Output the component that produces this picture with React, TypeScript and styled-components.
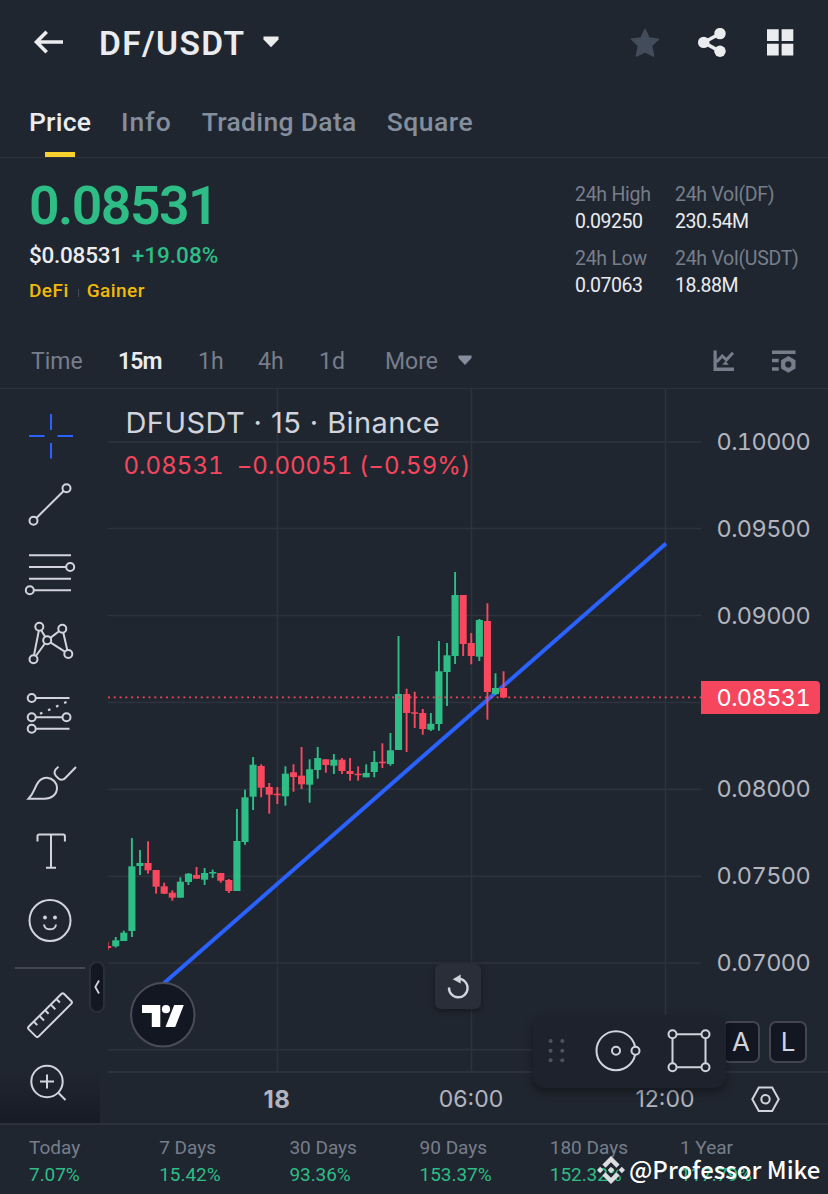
import React from "react";
import styled, { createGlobalStyle } from "styled-components";
import { SiBinance } from "react-icons/si";

const c = {
  bg: "#202630",
  line: "#2c323c",
  grid: "#2d333c",
  text: "#eaecef",
  muted: "#848e9c",
  dim: "#777e8b",
  green: "#2ebd85",
  red: "#f6465d",
  candleRed: "#f9475d",
  yellow: "#f0b90b",
  icon: "#d1d4dc",
  blue: "#2962ff",
};

const GlobalStyle = createGlobalStyle`
  * { box-sizing: border-box; }
  body { margin: 0; background: ${c.bg}; }
`;

const Screen = styled.div`
  position: relative;
  width: 828px;
  height: 1194px;
  overflow: hidden;
  display: flex;
  flex-direction: column;
  background: ${c.bg};
  color: ${c.text};
  font-family: Roboto, "Liberation Sans", sans-serif;
`;

const TopBar = styled.header`
  height: 87px;
  display: flex;
  align-items: center;
  padding: 0 34px 0 33px;
`;

const BackIcon = styled.svg`
  width: 32px;
  height: 30px;
  margin: -3px 34px 0 0;
`;

const Pair = styled.h1`
  margin: 0;
  font-size: 33.5px;
  line-height: 40px;
  font-weight: 600;
  letter-spacing: 1.35px;
`;

const Caret = styled.svg<{ $size: number; $gap?: number }>`
  width: ${(p) => p.$size}px;
  height: ${(p) => p.$size * 0.75}px;
  margin: -3px 0 0 ${(p) => p.$gap ?? 0}px;
`;

const Actions = styled.div`
  margin: -2px 0 0 auto;
  display: flex;
  align-items: center;
  gap: 37px;
`;

const ActionIcon = styled.svg`
  width: 30px;
  height: 30px;
`;

const Tabs = styled.nav`
  height: 71px;
  display: flex;
  gap: 30px;
  padding: 0 29px;
  border-bottom: 1px solid ${c.line};
`;

const Tab = styled.div<{ $active?: boolean; $space?: number }>`
  height: 70px;
  display: flex;
  flex-direction: column;
  align-items: center;
  justify-content: space-between;
  padding-top: 19px;
  font-size: 26.5px;
  line-height: 32px;
  font-weight: 500;
  letter-spacing: ${(p) => p.$space ?? 0}px;
  white-space: nowrap;
  color: ${(p) => (p.$active ? c.text : c.muted)};
`;

const Underline = styled.span`
  width: 30px;
  height: 5px;
  background: #f8d12f;
`;

const Summary = styled.section`
  height: 176px;
  display: flex;
  justify-content: space-between;
  padding: 21px 29px 0;
`;

const Quote = styled.div`
  display: flex;
  flex-direction: column;
`;

const BigPrice = styled.div`
  font-size: 53.5px;
  line-height: 54px;
  font-weight: 600;
  letter-spacing: -1.5px;
  color: ${c.green};
`;

const SubPrice = styled.div`
  display: flex;
  gap: 9px;
  margin-top: 7px;
  font-size: 22.5px;
  line-height: 30px;
  font-weight: 500;
  letter-spacing: -0.25px;
`;

const Change = styled.span`
  color: ${c.green};
  letter-spacing: 0;
`;

const Tags = styled.div`
  display: flex;
  align-items: center;
  margin-top: 8px;
  font-size: 19px;
  line-height: 26px;
  font-weight: 500;
  letter-spacing: 0.45px;
  color: ${c.yellow};
`;

const TagDivider = styled.i`
  width: 1px;
  height: 8px;
  margin: 4px 8px 0 9px;
  background: #434c5a;
`;

const Stats = styled.dl`
  margin: 0;
  display: grid;
  grid-template-columns: 100px 124px;
  grid-auto-rows: 63.5px;
`;

const Stat = styled.div`
  padding-top: 2px;
  font-size: 19.5px;
  line-height: 27px;
  white-space: nowrap;
`;

const StatLabel = styled.dt`
  color: ${c.dim};
  letter-spacing: -0.28px;
`;

const StatValue = styled.dd`
  margin: 0;
  color: ${c.text};
  letter-spacing: -0.5px;
`;

const Intervals = styled.nav`
  height: 55px;
  display: flex;
  align-items: center;
  padding: 1px 31px 0;
  font-size: 23px;
  border-bottom: 1px solid ${c.line};
`;

const Interval = styled.span<{ $w: number; $active?: boolean }>`
  width: ${(p) => p.$w}px;
  letter-spacing: ${(p) => (p.$active ? -0.9 : 0)}px;
  font-weight: ${(p) => (p.$active ? 600 : 400)};
  color: ${(p) => (p.$active ? c.text : c.dim)};
`;

const ToolIcons = styled.div`
  margin-left: auto;
  display: flex;
  gap: 34px;
`;

const SmallIcon = styled.svg`
  width: 26px;
  height: 26px;
`;

const ChartArea = styled.main`
  position: relative;
  height: 736px;
  display: flex;
  border-bottom: 2px solid ${c.line};
`;

const Sidebar = styled.aside`
  width: 100px;
  display: flex;
  flex-direction: column;
  padding-top: 12.5px;
  background: linear-gradient(to bottom, transparent 680px, #171b26 734px);
`;

const Tool = styled.div`
  height: 69px;
  display: flex;
  align-items: center;
  padding-left: 22px;
`;

const ToolSvg = styled.svg`
  width: 56px;
  height: 56px;
  fill: none;
  stroke: ${c.icon};
  stroke-width: 2;
`;

const ToolDivider = styled.hr`
  width: 70px;
  height: 2px;
  margin: 13px 0 12px 15px;
  border: 0;
  background: #434651;
`;

const ChartMain = styled.div`
  flex: 1;
  display: flex;
  flex-direction: column;
`;

const PlotRow = styled.div`
  height: 682px;
  display: flex;
  padding-left: 8px;
`;

const PlotSvg = styled.svg`
  width: 593px;
  height: 682px;
  flex: none;
`;

const PriceScale = styled.div`
  width: 127px;
  padding-top: 10px;
  font-family: Inter, "Liberation Sans", sans-serif;
  font-variant-numeric: tabular-nums;
`;

const PriceTick = styled.div`
  height: 86.85px;
  line-height: 86.85px;
  padding-left: 15.5px;
  font-size: 23.5px;
  letter-spacing: -0.6px;
  color: #b2b5be;
`;

const ScaleModes = styled.div`
  display: flex;
  gap: 9px;
  margin-top: 14px;
  padding-left: 21px;
`;

const ScaleMode = styled.button`
  width: 38px;
  height: 42px;
  padding: 0;
  border: 2px solid #434651;
  border-radius: 7px;
  background: #131722;
  color: ${c.icon};
  font: 400 26px Inter, sans-serif;
`;

const TimeScale = styled.div`
  height: 52px;
  margin-left: 8px;
  display: flex;
  align-items: center;
  border-top: 2px solid ${c.line};
  padding: 2px 0 0 84px;
  font-family: Inter, "Liberation Sans", sans-serif;
  font-size: 23px;
  color: #b2b5be;
`;

const TimeTick = styled.span<{ $bold?: boolean }>`
  width: 170px;
  margin-right: 24px;
  text-align: center;
  font-size: ${(p) => (p.$bold ? 24 : 23)}px;
  letter-spacing: ${(p) => (p.$bold ? 0.6 : 0)}px;
  font-weight: ${(p) => (p.$bold ? 700 : 400)};
  &:nth-child(3) {
    margin-right: 0;
  }
`;

const Legend = styled.div`
  position: absolute;
  top: 12.5px;
  left: 123.5px;
  font-family: Inter, "Liberation Sans", sans-serif;
`;

const LegendTitle = styled.div`
  margin-left: 2px;
  font-size: 29px;
  line-height: 42px;
  letter-spacing: 0.42px;
  white-space: nowrap;
  color: ${c.icon};
`;

const LegendValues = styled.div`
  display: flex;
  gap: 13px;
  font-size: 24px;
  line-height: 43px;
  letter-spacing: 0.05px;
  font-variant-numeric: tabular-nums;
  white-space: nowrap;
  color: ${c.red};
`;

const PriceBadge = styled.div`
  position: absolute;
  left: 701px;
  top: 292px;
  width: 119px;
  height: 33px;
  padding-left: 15.5px;
  border-radius: 0 4px 4px 0;
  background: ${c.red};
  color: #fff;
  font: 400 23.5px/33px Inter, sans-serif;
  font-variant-numeric: tabular-nums;
  letter-spacing: -0.6px;
`;

const CollapseTab = styled.div`
  position: absolute;
  left: 89px;
  top: 572px;
  width: 16px;
  height: 52px;
  border: 2px solid #2a2e39;
  border-radius: 8px;
  background: #131722;
`;

const BrandMark = styled.svg`
  position: absolute;
  left: 129px;
  top: 592px;
  width: 68px;
  height: 68px;
`;

const ResetButton = styled.div`
  position: absolute;
  left: 435px;
  top: 575px;
  width: 46px;
  height: 45px;
  border-radius: 6px;
  background: #2a2e39;
  box-shadow: 0 2px 6px rgba(0, 0, 0, 0.4);
`;

const FloatingBar = styled.div`
  position: absolute;
  left: 533px;
  top: 626px;
  width: 193px;
  height: 73px;
  border-radius: 12px;
  background: #1e222d;
  box-shadow: 0 4px 10px rgba(0, 0, 0, 0.4);
`;

const Performance = styled.footer`
  display: grid;
  grid-template-columns: repeat(6, 130.2px);
  padding: 8.5px 0 0 29px;
  font-size: 19px;
  line-height: 27px;
  white-space: nowrap;
`;

const PerfLabel = styled.div`
  color: ${c.dim};
`;

const PerfValue = styled.div`
  color: ${c.green};
  letter-spacing: -0.05px;
`;

const Watermark = styled.div`
  position: absolute;
  left: 597px;
  top: 1152px;
  height: 36px;
  display: flex;
  align-items: center;
  gap: 4px;
  color: #fff;
  font: 500 24px/36px "Noto Sans CJK SC", sans-serif;
  white-space: nowrap;
  svg {
    color: #dcdde0;
  }
`;

const Handle = styled.span`
  margin-top: -3px;
`;

/* Candles: [up, body top, body bottom, high, low], in pixels from the top of the screen */
const candles: [number, number, number, number, number][] = [
  [0, 946, 948, 942, 950],
  [1, 940.3, 946.3, 937, 947.5],
  [1, 932.7, 941, 930.7, 941],
  [1, 866.3, 931, 838, 937],
  [1, 863, 866, 850, 875],
  [0, 863, 870.3, 841.3, 873.7],
  [0, 870, 886.7, 870, 893.7],
  [0, 886.3, 893.7, 882.7, 894],
  [0, 892.7, 897.7, 890.3, 900.7],
  [1, 881.7, 897.7, 877.3, 897.7],
  [1, 873.7, 882, 873, 885],
  [0, 875, 878.7, 867, 878.7],
  [1, 873, 879.7, 868, 885],
  [1, 872, 873.5, 869.7, 878],
  [0, 873, 880.7, 873, 882.7],
  [0, 880, 891, 879, 893],
  [1, 841, 891, 809, 891],
  [1, 797.3, 842, 789.7, 844.7],
  [1, 764.7, 796.7, 757, 810],
  [0, 766, 787.7, 764.3, 797.3],
  [0, 787, 794.7, 783, 813.7],
  [0, 793.7, 795.2, 787, 804],
  [1, 773.7, 796.3, 766.3, 805.7],
  [0, 772.3, 777, 764.3, 791.7],
  [0, 775.7, 784.3, 747, 789],
  [1, 769.3, 784.7, 759.3, 802.7],
  [1, 758, 770, 747, 778.7],
  [0, 759.3, 765, 759.3, 772.7],
  [1, 759.7, 765.7, 754, 774],
  [0, 759.7, 771, 758, 774],
  [0, 771, 774, 758, 780.7],
  [0, 773.7, 775.2, 766.3, 780.7],
  [1, 773, 777.3, 764.3, 777.3],
  [1, 762, 772, 751, 777.3],
  [0, 761.7, 763.2, 743.3, 768],
  [1, 750.3, 764, 733, 765.7],
  [1, 694, 750, 636, 750],
  [0, 694, 713, 688.7, 752],
  [0, 712.3, 713.8, 691.7, 728],
  [0, 713, 729, 709, 734.7],
  [1, 723.7, 729.7, 713, 731],
  [1, 671.3, 724, 641, 730.7],
  [1, 655.3, 672, 643, 706],
  [1, 595, 656, 572, 664],
  [0, 595, 644, 595, 656],
  [0, 643, 656, 633, 664.3],
  [1, 620, 656.7, 619, 661],
  [0, 621, 692, 603.3, 719.7],
  [1, 688, 694, 673.3, 694.7],
  [0, 688, 697.5, 671.3, 697.5],
];

const rows = [442, 528.5, 615.5, 702.5, 789.3, 876.3, 963, 1049.7];
const columns = [277.5, 471.5, 665.5];

const Plot = () => (
  <PlotSvg viewBox="108 389 593 682">
    {rows.map((y) => (
      <rect key={y} x="108" y={y - 0.8} width="593" height="1.6" fill={c.grid} />
    ))}
    {columns.map((x) => (
      <rect key={x} x={x - 0.8} y="389" width="1.6" height="682" fill={c.grid} />
    ))}
    <path d="M163 984 666 543.5" stroke={c.blue} strokeWidth="4" />
    {candles.map(([up, top, bottom, high, low], i) => {
      const x = 107.6 + 8.08 * i;
      return (
        <g key={i} fill={up ? c.green : c.candleRed}>
          <rect x={x - 0.9} y={high} width="1.9" height={low - high} />
          <rect x={x - 3.5} y={top} width="7.1" height={bottom - top} />
        </g>
      );
    })}
    <path
      d="M108 697.4H701"
      stroke={c.red}
      strokeWidth="1.9"
      strokeDasharray="1.9 3.9"
    />
  </PlotSvg>
);

const tools: React.ReactNode[] = [
  <g stroke={c.blue} strokeWidth="2">
    <path d="M51 414v16M51 443v15.5M29 436h15.5M57.5 436H73" />
  </g>,
  <>
    <circle cx="66.5" cy="488.2" r="4" />
    <circle cx="33.5" cy="520.8" r="4" />
    <path d="m36.4 518 27.2-27" />
  </>,
  <>
    <path d="M29 555.3h42M29 567h37M29 578.7h42M34 590.3h37" />
    <circle cx="70.2" cy="567" r="4" />
    <circle cx="29.8" cy="590.3" r="4" />
  </>,
  <>
    <circle cx="39.3" cy="626.8" r="4" />
    <circle cx="62.3" cy="628.7" r="4" />
    <circle cx="47.2" cy="640.3" r="4" />
    <circle cx="33.5" cy="659.3" r="4" />
    <circle cx="68.3" cy="654" r="4" />
    <path d="m41.4 630.4 3.7 6.4M38.8 630.9l-4.8 24.3M35.9 656l9-12.5M50.4 637.9l8.6-6.7M63.3 632.7l4 17.2M50.7 642.6l14.1 9.1" />
  </>,
  <>
    <circle cx="31.7" cy="698" r="4" />
    <circle cx="31.7" cy="717.3" r="4" />
    <circle cx="66.5" cy="717.3" r="4" />
    <circle cx="31.7" cy="728.8" r="4" />
    <path d="M35.7 698H69.5M35.7 717.3h26.8M35.7 728.8H69.5" />
    <path d="M40 713.8 67 701.8" strokeDasharray="2.6 6.2" strokeWidth="2.2" />
  </>,
  <>
    <path d="M28.5 798.7C33.500 793.5 34.300 789.300 36.600 784.800 39 779.800 43 777.500 47 777.700c5.700.4 10 5 10 10.300 0 6.400-5.500 10.700-12.500 10.700Z" />
    <path d="M76 767 65.800 777.500c-2.300 2.700-4.800 3-7.300 1l-2.600-2.600c-2.400-2.600-1.800-5.800 2.600-9.100" />
  </>,
  <path d="M37.500 841.500v-5.300q0-1.700 1.700-1.700h24q1.700 0 1.700 1.700v5.300M51 834.500v33M46 867.700h10" />,
  <>
    <circle cx="50" cy="920.500" r="20.500" />
    <circle cx="45" cy="917.500" r="1.900" fill={c.icon} stroke="none" />
    <circle cx="55" cy="917.500" r="1.900" fill={c.icon} stroke="none" />
    <path d="M44 924.500c.6 6.400 11.400 6.400 12 0" />
  </>,
];

const lowerTools: React.ReactNode[] = [
  <g transform="translate(50 1015.2) rotate(-45)">
    <rect x="-25" y="-7" width="50" height="14" rx="2" />
    <path d="M-16-7v5M-8-7v6.500M0-7v5M8-7v6.500M16-7v5" />
  </g>,
  <>
    <circle cx="47" cy="1081.500" r="15.700" />
    <path d="M40 1081.500h14M47 1074.500v14M58.500 1093l7 7" />
  </>,
];

const performance = [
  ["Today", "7.07%"],
  ["7 Days", "15.42%"],
  ["30 Days", "93.36%"],
  ["90 Days", "153.37%"],
  ["180 Days", "152.32%"],
  ["1 Year", "117.79%"],
];

const ticks = ["0.10000", "0.09500", "0.09000", "", "0.08000", "0.07500", "0.07000"];

export default function App() {
  return (
    <>
      <GlobalStyle />
      <Screen>
        <TopBar>
          <BackIcon viewBox="33 27 32 30" fill="none" stroke={c.text} strokeWidth="3.600">
            <path d="M63 42H37M46.700 31.800 36.500 42l10.200 10.200" />
          </BackIcon>
          <Pair>DF/USDT</Pair>
          <Caret $size={16} $gap={18} viewBox="0 0 16 12">
            <path d="M.500.500h15v3L8 11.300.500 3.500Z" fill={c.text} />
          </Caret>
          <Actions>
            <ActionIcon viewBox="0 0 30 30">
              <path
                d="m15 1.500 4 8.600 9.500 1.100-7 6.400 2.100 10.400L15 23.700 6.400 28l2.100-10.400-7-6.400 9.500-1.100Z"
                fill="#434c5a"
                stroke="#434c5a"
                strokeWidth="1.600"
                strokeLinejoin="round"
              />
            </ActionIcon>
            <ActionIcon viewBox="697 28 30 30" fill={c.text}>
              <path d="m719.700 33.700-16 8.700 16 8.900" fill="none" stroke={c.text} strokeWidth="3.500" />
              <circle cx="720" cy="33.600" r="5.700" />
              <circle cx="703.700" cy="42.400" r="5.700" />
              <circle cx="720" cy="51.300" r="5.700" />
            </ActionIcon>
            <ActionIcon viewBox="764 28 30 30" fill={c.text}>
              <path d="M767 29.300h11.700V41H767zM781.600 29.300h11.700V41h-11.700zM767 43.800h11.700v11.700H767zM781.600 43.800h11.700v11.700h-11.700z" />
            </ActionIcon>
          </Actions>
        </TopBar>

        <Tabs>
          <Tab $active $space={0.2}>
            Price
            <Underline />
          </Tab>
          <Tab $space={1}>Info</Tab>
          <Tab $space={0.32}>Trading Data</Tab>
          <Tab $space={0.5}>Square</Tab>
        </Tabs>

        <Summary>
          <Quote>
            <BigPrice>0.08531</BigPrice>
            <SubPrice>
              <span>$0.08531</span>
              <Change>+19.08%</Change>
            </SubPrice>
            <Tags>
              DeFi
              <TagDivider />
              Gainer
            </Tags>
          </Quote>
          <Stats>
            <Stat>
              <StatLabel>24h High</StatLabel>
              <StatValue>0.09250</StatValue>
            </Stat>
            <Stat>
              <StatLabel>24h Vol(DF)</StatLabel>
              <StatValue>230.54M</StatValue>
            </Stat>
            <Stat>
              <StatLabel>24h Low</StatLabel>
              <StatValue>0.07063</StatValue>
            </Stat>
            <Stat>
              <StatLabel>24h Vol(USDT)</StatLabel>
              <StatValue>18.88M</StatValue>
            </Stat>
          </Stats>
        </Summary>

        <Intervals>
          <Interval $w={87}>Time</Interval>
          <Interval $w={80} $active>
            15m
          </Interval>
          <Interval $w={60}>1h</Interval>
          <Interval $w={61}>4h</Interval>
          <Interval $w={66}>1d</Interval>
          <Interval $w={73}>More</Interval>
          <Caret $size={14} viewBox="0 0 16 12">
            <path d="M.500.500h15v3L8 11.300.500 3.500Z" fill={c.muted} />
          </Caret>
          <ToolIcons>
            <SmallIcon viewBox="711.500 348.500 26 26" fill={c.dim}>
              <path d="M714 350h3.300v17h17.200v3.500H714z" />
              <path d="m717 361.500 5.700-6 4.300 3.800 6.500-7" fill="none" stroke={c.dim} strokeWidth="3" />
              <path d="m722.700 364.300 3.300-3.800 3.300 3.800z" />
            </SmallIcon>
            <SmallIcon viewBox="771 348.500 26 26" fill={c.dim}>
              <path d="M772 350h23.500v3.600H772zM772 358.300h6.700v3.500H772zM772 366.700h6.700v3.500H772z" />
              <path
                fillRule="evenodd"
                d="m788.300 355.500 7.200 4.200v8.400l-7.200 4.200-7.200-4.200v-8.400zM788.300 360.800a3.100 3.100 0 1 0 0 6.200 3.100 3.100 0 0 0 0-6.200z"
              />
            </SmallIcon>
          </ToolIcons>
        </Intervals>

        <ChartArea>
          <Sidebar>
            {tools.map((icon, i) => (
              <Tool key={i}>
                <ToolSvg viewBox={`22 ${408 + 69 * i} 56 56`}>{icon}</ToolSvg>
              </Tool>
            ))}
            <ToolDivider />
            {lowerTools.map((icon, i) => (
              <Tool key={i}>
                <ToolSvg viewBox={`22 ${987 + 69 * i} 56 56`}>{icon}</ToolSvg>
              </Tool>
            ))}
          </Sidebar>
          <ChartMain>
            <PlotRow>
              <Plot />
              <PriceScale>
                {ticks.map((t, i) => (
                  <PriceTick key={i}>{t}</PriceTick>
                ))}
                <ScaleModes>
                  <ScaleMode>A</ScaleMode>
                  <ScaleMode>L</ScaleMode>
                </ScaleModes>
              </PriceScale>
            </PlotRow>
            <TimeScale>
              <TimeTick $bold>18</TimeTick>
              <TimeTick>06:00</TimeTick>
              <TimeTick>12:00</TimeTick>
              <svg width="30" height="30" viewBox="750 1083.500 30 30" fill="none" stroke={c.icon} strokeWidth="2">
                <path d="M758.800 1087h13.400l6.500 11.700-6.500 11.800h-13.400l-6.500-11.800z" />
                <circle cx="765.500" cy="1098.700" r="4.200" />
              </svg>
            </TimeScale>
          </ChartMain>

          <Legend>
            <LegendTitle>DFUSDT · 15 · Binance</LegendTitle>
            <LegendValues>
              <span>0.08531</span>
              <span>−0.00051 (−0.59%)</span>
            </LegendValues>
          </Legend>
          <PriceBadge>0.08531</PriceBadge>
          <CollapseTab>
            <svg width="12" height="48" viewBox="0 0 12 48" fill="none" stroke={c.icon} strokeWidth="1.800">
              <path d="M8 17.500 4.300 24 8 30.500" />
            </svg>
          </CollapseTab>
          <BrandMark viewBox="129 981 68 68">
            <circle cx="162.800" cy="1014.800" r="31.700" fill="#131722" stroke="#4a4d57" strokeWidth="2" />
            <g fill="#fff">
              <path d="M142 1005h18.300v22h-8.500v-14H142z" />
              <circle cx="166" cy="1009.200" r="4.100" />
              <path d="M174.200 1005h9.600l-8.600 22h-9.700z" />
            </g>
          </BrandMark>
          <ResetButton>
            <svg width="46" height="45" viewBox="435 964 46 45" fill="none" stroke={c.icon} strokeWidth="2.400">
              <path d="M449 987.500a9.300 9.300 0 1 0 9.300-8.800" />
              <path d="m452.700 979.300 8-4.900v9z" fill={c.icon} stroke="none" />
            </svg>
          </ResetButton>
          <FloatingBar>
            <svg width="193" height="73" viewBox="533 1015 193 73" fill="none" stroke={c.icon} strokeWidth="2">
              <g fill="#50535e" stroke="none">
                {[1041, 1050.7, 1060.3].map((y) => (
                  <React.Fragment key={y}>
                    <circle cx="550.600" cy={y} r="2" />
                    <circle cx="562.300" cy={y} r="2" />
                  </React.Fragment>
                ))}
              </g>
              <circle cx="616" cy="1050.700" r="19.500" />
              <circle cx="616" cy="1050.700" r="4" />
              <path d="M672.500 1034.300h33v33h-33z" />
              <g fill="#1e222d">
                <circle cx="635.500" cy="1050.700" r="4" />
                <circle cx="672.500" cy="1034.300" r="4" />
                <circle cx="705.500" cy="1034.300" r="4" />
                <circle cx="672.500" cy="1067.300" r="4" />
                <circle cx="705.500" cy="1067.300" r="4" />
              </g>
            </svg>
          </FloatingBar>
        </ChartArea>

        <Performance>
          {performance.map(([label, value]) => (
            <div key={label}>
              <PerfLabel>{label}</PerfLabel>
              <PerfValue>{value}</PerfValue>
            </div>
          ))}
        </Performance>

        <Watermark>
          <SiBinance size={28} />
          <Handle>@Professor Mike</Handle>
        </Watermark>
      </Screen>
    </>
  );
}
